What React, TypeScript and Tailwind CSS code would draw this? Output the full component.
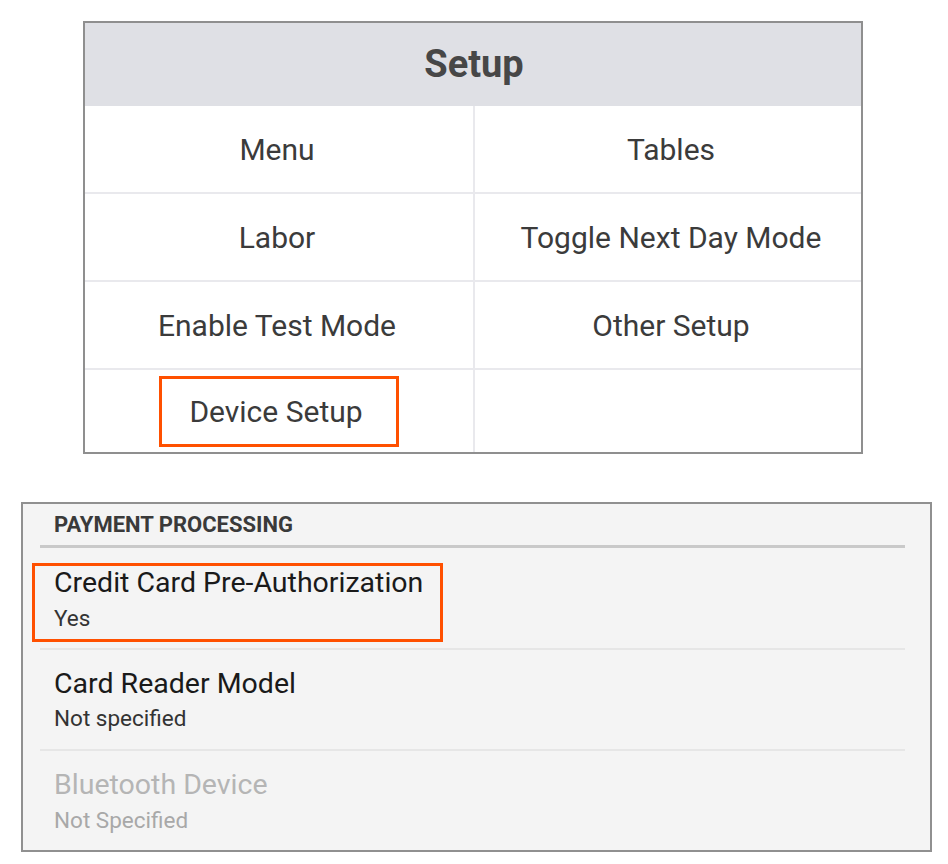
import React from 'react';

const font = { fontFamily: 'Roboto, "Noto Sans", sans-serif' };

const setupItems = [
  ['Menu', 'Tables'],
  ['Labor', 'Toggle Next Day Mode'],
  ['Enable Test Mode', 'Other Setup']
];

function SetupCell({ label, left }: { label: string; left?: boolean }) {
  return (
    <div
      className={`flex h-[88px] items-center justify-center border-b-2 border-[#e9e9ed] text-[30px] text-[#3b3b3b] ${
        left ? 'border-r-2 pr-[4px]' : 'pl-[6px]'
      }`}
    >
      {label}
    </div>
  );
}

function SetupPanel() {
  return (
    <div className="ml-[83px] w-[780px] border-2 border-[#8f8f8f] bg-white">
      <div className="flex h-[83px] items-center justify-center bg-[#dfe0e5] pl-[2px] text-[38px] font-bold text-[#474747]">
        Setup
      </div>
      <div className="grid grid-cols-[390px_1fr]">
        {setupItems.map(([a, b]) => (
          <React.Fragment key={a}>
            <SetupCell label={a} left />
            <SetupCell label={b} />
          </React.Fragment>
        ))}
        <div className="flex h-[82px] items-center justify-center border-r-2 border-[#e9e9ed]">
          <div className="flex h-[71px] w-[240px] items-center justify-center border-[3px] border-[#ff5000] pr-[6px] text-[30px] text-[#3b3b3b]">
            Device Setup
          </div>
        </div>
        <div className="h-[82px]" />
      </div>
    </div>
  );
}

function PaymentPanel() {
  return (
    <div className="ml-[21px] mt-[48px] h-[350px] w-[911px] overflow-hidden border-2 border-[#909090] bg-[#f4f4f4] pl-[17px] pr-[25px]">
      <div className="flex h-[44px] items-center border-b-[3px] border-[#c9c9c9] pl-[14px] text-[22px] font-bold text-[#3a3a3a]">
        PAYMENT PROCESSING
      </div>
      <div className="h-[102px] border-b-2 border-[#e6e6e6] pt-[15px]">
        <div className="ml-[-8px] h-[79px] w-[411px] border-[3px] border-[#ff5000] pl-[19px] pt-[1px]">
          <div className="text-[28.5px] leading-[32px] text-[#1a1a1a]">
            Credit Card Pre-Authorization
          </div>
          <div className="mt-[6px] text-[22.5px] leading-[26px] text-[#333333]">Yes</div>
        </div>
      </div>
      <div className="h-[101px] border-b-2 border-[#e6e6e6] pl-[14px] pt-[18px]">
        <div className="text-[28.5px] leading-[32px] text-[#1a1a1a]">Card Reader Model</div>
        <div className="mt-[5px] text-[22.5px] leading-[26px] text-[#333333]">Not specified</div>
      </div>
      <div className="h-[101px] pl-[14px] pt-[18px]">
        <div className="text-[28.5px] leading-[32px] text-[#b5b5b5]">Bluetooth Device</div>
        <div className="mt-[6px] text-[22.5px] leading-[26px] text-[#a8a8a8]">Not Specified</div>
      </div>
    </div>
  );
}

export default function App() {
  return (
    <div className="h-[864px] w-[948px] bg-white pt-[21px]" style={font}>
      <SetupPanel />
      <PaymentPanel />
    </div>
  );
}
